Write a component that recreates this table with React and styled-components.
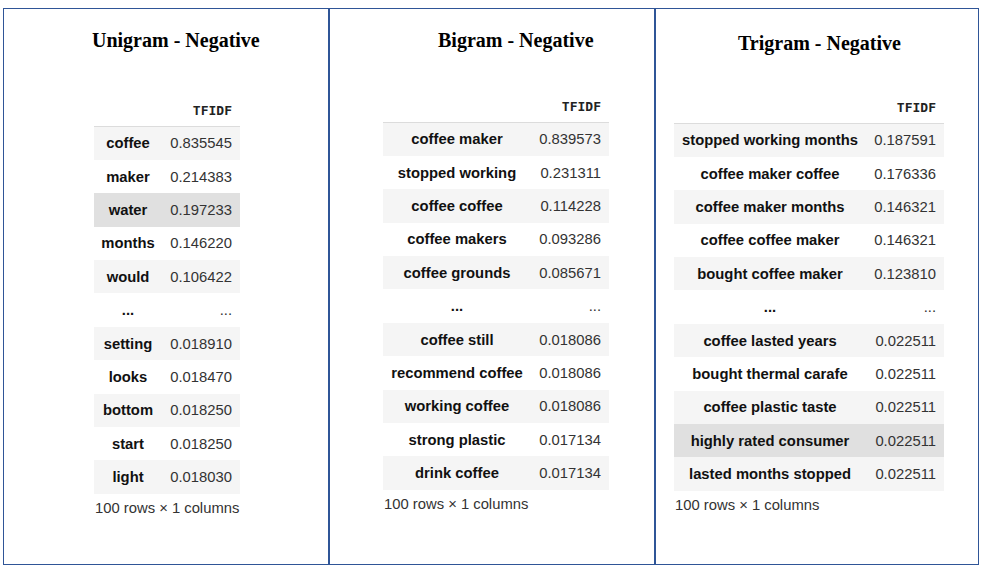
import React from "react";
import styled, { createGlobalStyle } from "styled-components";

const GlobalStyle = createGlobalStyle`
  html, body {
    margin: 0;
    padding: 0;
    background: #ffffff;
  }
`;

const panels = [
  {
    title: "Unigram - Negative",
    titleTop: 19.5,
    titleLeft: 88,
    tableTop: 51.5,
    tableLeft: 90,
    indexWidth: 68,
    hover: 2,
    rows: [
      ["coffee", "0.835545"],
      ["maker", "0.214383"],
      ["water", "0.197233"],
      ["months", "0.146220"],
      ["would", "0.106422"],
      ["...", "..."],
      ["setting", "0.018910"],
      ["looks", "0.018470"],
      ["bottom", "0.018250"],
      ["start", "0.018250"],
      ["light", "0.018030"],
    ],
  },
  {
    title: "Bigram - Negative",
    titleTop: 19.5,
    titleLeft: 108,
    tableTop: 47.5,
    tableLeft: 53,
    indexWidth: 148,
    hover: -1,
    rows: [
      ["coffee maker", "0.839573"],
      ["stopped working", "0.231311"],
      ["coffee coffee", "0.114228"],
      ["coffee makers", "0.093286"],
      ["coffee grounds", "0.085671"],
      ["...", "..."],
      ["coffee still", "0.018086"],
      ["recommend coffee", "0.018086"],
      ["working coffee", "0.018086"],
      ["strong plastic", "0.017134"],
      ["drink coffee", "0.017134"],
    ],
  },
  {
    title: "Trigram - Negative",
    titleTop: 22.5,
    titleLeft: 82,
    tableTop: 45.5,
    tableLeft: 18,
    indexWidth: 192,
    hover: 9,
    rows: [
      ["stopped working months", "0.187591"],
      ["coffee maker coffee", "0.176336"],
      ["coffee maker months", "0.146321"],
      ["coffee coffee maker", "0.146321"],
      ["bought coffee maker", "0.123810"],
      ["...", "..."],
      ["coffee lasted years", "0.022511"],
      ["bought thermal carafe", "0.022511"],
      ["coffee plastic taste", "0.022511"],
      ["highly rated consumer", "0.022511"],
      ["lasted months stopped", "0.022511"],
    ],
  },
];

export default function App() {
  return (
    <Page>
      <GlobalStyle />
      <Frame>
        {panels.map((panel) => (
          <Panel key={panel.title}>
            <Title $top={panel.titleTop} $left={panel.titleLeft}>
              {panel.title}
            </Title>
            <DataFrame $top={panel.tableTop} $left={panel.tableLeft}>
              <Table>
                <thead>
                  <tr>
                    <Blank $width={panel.indexWidth} />
                    <ColHead>TFIDF</ColHead>
                  </tr>
                </thead>
                <tbody>
                  {panel.rows.map(([term, value], idx) => (
                    <Row key={term + idx} $striped={idx % 2 === 0} $hover={idx === panel.hover}>
                      <IndexCell>{term}</IndexCell>
                      <ValueCell>{value}</ValueCell>
                    </Row>
                  ))}
                </tbody>
              </Table>
              <Shape>100 rows × 1 columns</Shape>
            </DataFrame>
          </Panel>
        ))}
      </Frame>
    </Page>
  );
}

const Page = styled.div`
  padding: 8px 0 0 3px;
`;

const Frame = styled.div`
  display: flex;
  width: 976px;
  height: 557px;
  box-sizing: border-box;
  border: 1px solid #2f5597;
`;

const Panel = styled.div`
  display: flex;
  flex-direction: column;
  align-items: flex-start;
  width: 324px;
  flex-shrink: 0;

  & + & {
    border-left: 2px solid #2f5597;
  }
  &:last-child {
    flex: 1;
    width: auto;
  }
`;

const Title = styled.h3`
  margin: ${(p) => p.$top}px 0 0 ${(p) => p.$left}px;
  font-family: "Liberation Serif", "Times New Roman", serif;
  font-size: 20px;
  font-weight: bold;
  color: #000000;
  white-space: nowrap;
`;

const DataFrame = styled.div`
  margin: ${(p) => p.$top}px 0 0 ${(p) => p.$left}px;
  font-family: "Liberation Sans", Arial, sans-serif;
  font-size: 14.8px;
`;

const Table = styled.table`
  border-collapse: collapse;
  border-spacing: 0;
`;

const Blank = styled.th`
  width: ${(p) => p.$width}px;
  padding: 0;
  border-bottom: 1px solid #dcdcdc;
`;

const ColHead = styled.th`
  width: 78px;
  box-sizing: border-box;
  padding: 0 8px 8px 0;
  text-align: right;
  font-family: "DejaVu Sans Mono", monospace;
  font-size: 13px;
  font-weight: bold;
  color: #222222;
  border-bottom: 1px solid #dcdcdc;
`;

const Row = styled.tr`
  height: 33.4px;
  background: ${(p) => (p.$hover ? "#e0e0e0" : p.$striped ? "#f5f5f5" : "#ffffff")};
`;

const IndexCell = styled.th`
  padding: 0;
  text-align: center;
  font-weight: bold;
  color: #111111;
  white-space: nowrap;
`;

const ValueCell = styled.td`
  padding: 0 8px 0 0;
  text-align: right;
  color: #333333;
`;

const Shape = styled.p`
  margin: 6px 0 0 1px;
  color: #333333;
  white-space: nowrap;
`;
